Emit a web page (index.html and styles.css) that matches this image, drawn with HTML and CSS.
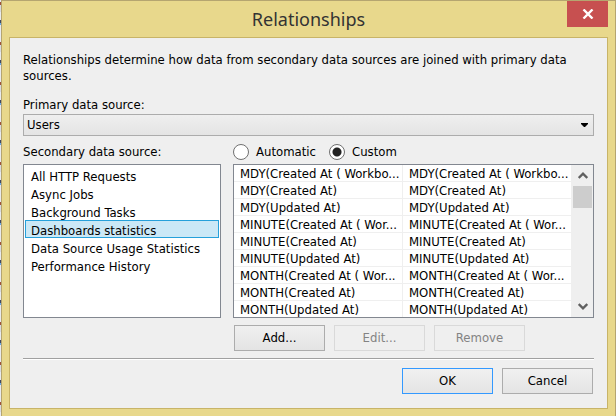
FILE: index.html
```html
<!DOCTYPE html>
<html lang="en">
<head>
    <meta charset="UTF-8">
    <meta name="viewport" content="width=device-width, initial-scale=1.0">
    <title>Relationships</title>
    <link rel="stylesheet" href="styles.css">
</head>
<body>
    <div class="dialog">
        <div class="title-bar">
            <h1 class="title">Relationships</h1>
            <button type="button" class="close-btn" aria-label="Close">
                <svg width="12" height="10" viewBox="0 0 12 10"><path d="M1.5 0.5 L10.5 9.5 M10.5 0.5 L1.5 9.5" stroke="#fff" stroke-width="2.4"/></svg>
            </button>
        </div>

        <form class="content">
            <p class="intro">Relationships determine how data from secondary data sources are joined with primary data sources.</p>

            <label class="field-label" for="primary">Primary data source:</label>
            <div class="dropdown">
                <select id="primary" class="dropdown-select">
                    <option>Users</option>
                </select>
                <svg class="dropdown-arrow" width="7" height="4" viewBox="0 0 7 4"><path d="M0 0 H7 V1 L4 4 H3 L0 1 Z" fill="#000"/></svg>
            </div>

            <div class="panels">
                <div class="secondary">
                    <label class="panel-head" for="secondary">Secondary data source:</label>
                    <select id="secondary" class="source-list" size="8">
                        <option>All HTTP Requests</option>
                        <option>Async Jobs</option>
                        <option>Background Tasks</option>
                        <option selected>Dashboards statistics</option>
                        <option>Data Source Usage Statistics</option>
                        <option>Performance History</option>
                    </select>
                </div>

                <div class="mapping">
                    <div class="panel-head modes">
                        <label class="mode"><input type="radio" name="mode" class="radio">Automatic</label>
                        <label class="mode"><input type="radio" name="mode" class="radio" checked>Custom</label>
                    </div>
                    <div class="field-box">
                        <div class="field-scroll">
                            <table class="field-table">
                                <tr><td>MDY(Created At ( Workbo...</td><td>MDY(Created At ( Workbo...</td></tr>
                                <tr><td>MDY(Created At)</td><td>MDY(Created At)</td></tr>
                                <tr><td>MDY(Updated At)</td><td>MDY(Updated At)</td></tr>
                                <tr><td>MINUTE(Created At ( Wor...</td><td>MINUTE(Created At ( Wor...</td></tr>
                                <tr><td>MINUTE(Created At)</td><td>MINUTE(Created At)</td></tr>
                                <tr><td>MINUTE(Updated At)</td><td>MINUTE(Updated At)</td></tr>
                                <tr><td>MONTH(Created At ( Wor...</td><td>MONTH(Created At ( Wor...</td></tr>
                                <tr><td>MONTH(Created At)</td><td>MONTH(Created At)</td></tr>
                                <tr><td>MONTH(Updated At)</td><td>MONTH(Updated At)</td></tr>
                            </table>
                        </div>
                        <div class="scrollbar">
                            <svg class="scroll-arrow" width="10" height="7" viewBox="0 0 10 7"><path d="M0.7 6 L5 1.7 L9.3 6" fill="none" stroke="#606060" stroke-width="2.4"/></svg>
                            <div class="thumb"></div>
                            <svg class="scroll-arrow" width="10" height="7" viewBox="0 0 10 7"><path d="M0.7 1 L5 5.3 L9.3 1" fill="none" stroke="#606060" stroke-width="2.4"/></svg>
                        </div>
                    </div>
                    <div class="edit-buttons">
                        <button type="button" class="btn">Add...</button>
                        <button type="button" class="btn" disabled>Edit...</button>
                        <button type="button" class="btn" disabled>Remove</button>
                    </div>
                </div>
            </div>

            <div class="footer">
                <button type="button" class="btn btn-default">OK</button>
                <button type="button" class="btn">Cancel</button>
            </div>
        </form>
    </div>
</body>
</html>
```
FILE: styles.css
```css
* {
    box-sizing: border-box;
}

body {
    margin: 0;
    padding-left: 1px;
    font-family: "DejaVu Sans Condensed", "DejaVu Sans", sans-serif;
    font-size: 13px;
    line-height: 16px;
    color: #000;
    overflow: hidden;
    /* sliver of the window behind the dialog */
    background: repeating-linear-gradient(#e8eaee 0 2px, #a05038 2px 5px, #d8dade 5px 12px, #e8eaee 12px 20px, #404860 20px 23px, #68a8e0 23px 25px, #e8eaee 25px 40px);
}

.dialog {
    padding: 0 7px 7px;
    border: 1px solid #b5a570;
    border-bottom: none;
    background-color: #e8d88c;
}

.title-bar {
    position: relative;
    height: 36px;
}

.title {
    margin: 0;
    font-family: "Noto Sans", sans-serif;
    font-size: 18px;
    font-weight: normal;
    line-height: 36px;
    text-align: center;
    color: #333;
}

.close-btn {
    position: absolute;
    top: 0;
    right: 0;
    display: flex;
    align-items: center;
    justify-content: center;
    width: 41px;
    height: 26px;
    padding: 0;
    border: none;
    background-color: #c75050;
}

.content {
    padding: 14px 13px;
    border: 1px solid #c8b468;
    background-color: #efefef;
}

.intro {
    margin: 0 0 13px;
}

.field-label {
    display: block;
    margin-bottom: 1px;
}

select, button {
    font: inherit;
    color: #000;
}

.dropdown {
    position: relative;
    height: 22px;
}

.dropdown-select {
    appearance: none;
    display: block;
    width: 100%;
    height: 22px;
    padding: 0 3px;
    border: 1px solid #acacac;
    border-radius: 0;
    background: linear-gradient(#efefef, #e4e4e4);
}

.dropdown-arrow {
    position: absolute;
    top: 9px;
    right: 6px;
    pointer-events: none;
}

.panels {
    display: flex;
    gap: 12px;
    margin-top: 6px;
}

.secondary {
    width: 198px;
}

.mapping {
    flex: 1;
    min-width: 0;
}

.panel-head {
    display: block;
    height: 22px;
    line-height: 20px;
}

.source-list {
    display: block;
    width: 100%;
    height: 154px;
    padding: 1px;
    border: 1px solid #828790;
    border-radius: 0;
    background-color: #fff;
    overflow: hidden;
    outline: none;
}

.source-list option {
    height: 18px;
    min-height: 18px;
    padding: 2px 5px 0;
    border: 1px solid transparent;
    line-height: 14px;
}

.source-list option:checked {
    border-color: #26a0da;
    background: linear-gradient(#cbe8f6, #cbe8f6);
    color: #000;
}

.modes {
    display: flex;
    gap: 13px;
}

.mode {
    display: flex;
    align-items: center;
    gap: 7px;
    height: 20px;
}

.radio {
    appearance: none;
    width: 16px;
    height: 16px;
    margin: 0;
    border: 1px solid #707070;
    border-radius: 50%;
    background-color: #fff;
}

.radio:checked {
    background: radial-gradient(circle, #222 4px, #fff 5px);
}

.field-box {
    display: flex;
    height: 154px;
    border: 1px solid #828790;
    background-color: #fff;
    overflow: hidden;
}

.field-scroll {
    flex: 1;
    min-width: 0;
}

.field-table {
    width: 100%;
    table-layout: fixed;
    border-collapse: separate;
    border-spacing: 0;
}

.field-table td {
    height: 17px;
    padding: 2px 0 0 6px;
    border-right: 1px solid #efefef;
    border-bottom: 1px solid #efefef;
    line-height: 14px;
    white-space: nowrap;
}

.scrollbar {
    display: flex;
    flex-direction: column;
    align-items: center;
    width: 21px;
    padding: 7px 1px;
    background-color: #efefef;
}

.scroll-arrow:last-child {
    margin-top: auto;
}

.thumb {
    width: 19px;
    height: 22px;
    margin-top: 7px;
    background-color: #cdcdcd;
}

.edit-buttons {
    display: flex;
    gap: 9px;
    margin: 7px 0 0 1px;
}

.btn {
    width: 91px;
    height: 26px;
    padding: 0;
    border: 1px solid #acacac;
    background: linear-gradient(#f0f0f0, #e4e4e4);
}

.btn:disabled {
    border-color: #d9d9d9;
    background: #efefef;
    color: #838383;
}

.btn-default {
    border-color: #3399ff;
}

.footer {
    display: flex;
    justify-content: flex-end;
    gap: 9px;
    margin-top: 7px;
    padding: 9px 1px 0 0;
    border-top: 1px solid #a0a0a0;
    box-shadow: inset 0 1px #fff;
}
```
